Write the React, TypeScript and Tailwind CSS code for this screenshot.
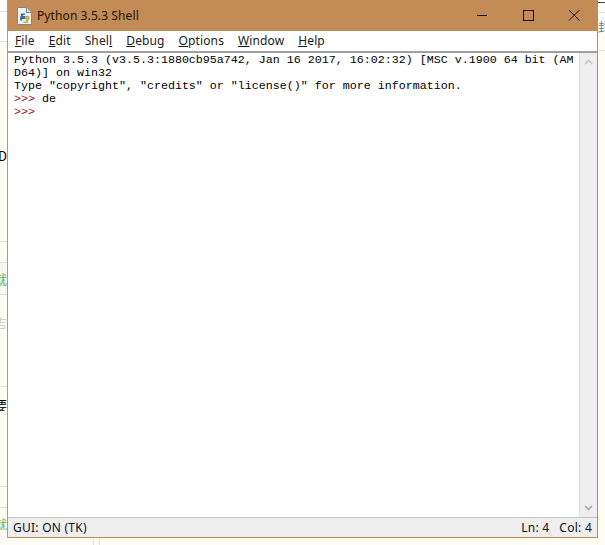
import React from "react";

/* ========= Menu ========= */
const menus: { pre: string; key: string; post: string }[] = [
  { pre: "", key: "F", post: "ile" },
  { pre: "", key: "E", post: "dit" },
  { pre: "Shel", key: "l", post: "" },
  { pre: "", key: "D", post: "ebug" },
  { pre: "", key: "O", post: "ptions" },
  { pre: "", key: "W", post: "indow" },
  { pre: "", key: "H", post: "elp" },
];

function PyIcon() {
  return (
    <svg width="17" height="18" viewBox="0 0 17 18">
      <path d="M1.5 0.5 H10.5 L15.5 5.5 V17.5 H1.5 Z" fill="#f1f2f6" stroke="#7f8594" />
      <path d="M10.5 0.5 V5.5 H15.5" fill="#d5d9e3" stroke="#7f8594" />
      <path d="M5 6.5 H9 V8 H7 V9 H9.5 V12 H6 V13.5 H4 V9.5 H5 Z" fill="#3b6ea8" />
      <path d="M10 9 H13.5 V13 H12 V16 H7.5 V14.5 H10 Z" fill="#c8b53a" />
    </svg>
  );
}

/* ========= Fragments of the page behind the window ========= */
function Clipped({ h, color, children }: { h: string; color: string; children: string }) {
  return (
    <div className={`flex ${h} items-center justify-end overflow-hidden font-['Noto_Sans_CJK_SC',sans-serif] text-[13px] leading-none ${color}`}>
      <span className="shrink-0">{children}</span>
    </div>
  );
}

/* ========= Component ========= */
export default function App() {
  return (
    <div className="flex h-[545px] w-[605px] overflow-hidden bg-[#fffdf3]">
      {/* Left side */}
      <div className="flex w-[7px] shrink-0 flex-col">
        <div className="h-[12px] border-b border-[#e2e2e2] bg-white" />
        <div className="h-[30px] border-b border-[#e2e2e2] bg-white" />
        <div className="h-[107px]" />
        <Clipped h="h-[13px]" color="text-black">D</Clipped>
        <div className="h-[80px] border-b border-[#e2e2e2]" />
        <div className="h-[20px]" />
        <div className="h-[33px] border-y border-[#e2e2e2] bg-[#f7f7f5] pt-[8px]">
          <Clipped h="h-[15px]" color="text-[#5db44a]">就</Clipped>
        </div>
        <div className="h-[20px]" />
        <Clipped h="h-[14px]" color="text-[#cfcfcf]">吉</Clipped>
        <div className="h-[58px] border-b border-[#e2e2e2]" />
        <div className="h-[11px]" />
        <Clipped h="h-[13px]" color="text-black">要</Clipped>
        <div className="h-[76px] border-b border-[#e2e2e2]" />
        <div className="h-[21px] border-b border-[#e2e2e2]" />
        <div className="h-[8px]" />
        <Clipped h="h-[14px]" color="text-[#5db44a]">就</Clipped>
      </div>

      <div className="flex w-[591px] shrink-0 flex-col">
        {/* Shell window */}
        <div className="flex h-[538px] shrink-0 flex-col border border-t-0 border-[#c08b58] border-l-[#a89a8c] bg-white">
          <div className="flex h-[31px] shrink-0 items-center bg-[#c38b56] pl-[8px] font-['Noto_Sans',sans-serif] text-[12px] tracking-[0.1px] text-[#1d1408]">
            <PyIcon />
            <span className="ml-[4px]">Python 3.5.3 Shell</span>
            <div className="ml-auto flex items-center">
              <svg width="46" height="31" viewBox="0 0 46 31">
                <path d="M18 15.5 H28" stroke="#111" strokeWidth="1" />
              </svg>
              <svg width="46" height="31" viewBox="0 0 46 31">
                <rect x="18.5" y="10.5" width="10" height="10" fill="none" stroke="#111" />
              </svg>
              <svg width="46" height="31" viewBox="0 0 46 31">
                <path d="M18 10 L28.5 20.5 M28.5 10 L18 20.5" stroke="#111" />
              </svg>
            </div>
          </div>

          <div className="flex h-[20px] shrink-0 items-center gap-[14px] pl-[7px] font-['Noto_Sans',sans-serif] text-[12px] tracking-[0.12px] text-[#1a1a1a]">
            {menus.map((m) => (
              <span key={m.pre + m.key + m.post}>
                {m.pre}
                <span className="underline">{m.key}</span>
                {m.post}
              </span>
            ))}
          </div>

          <div className="flex min-h-0 flex-1 border-t-2 border-[#a0a0a0]">
            <div className="flex-1 border-r border-[#e0e0e0] pl-[6px] pt-[1px] font-['Liberation_Mono',monospace] text-[11.67px] leading-[13px] whitespace-pre text-black">
              <div>Python 3.5.3 (v3.5.3:1880cb95a742, Jan 16 2017, 16:02:32) [MSC v.1900 64 bit (AM</div>
              <div>D64)] on win32</div>
              <div>Type "copyright", "credits" or "license()" for more information.</div>
              <div>
                <span className="text-[#8e1a1a]">&gt;&gt;&gt;</span> de
              </div>
              <div className="text-[#8e1a1a]">&gt;&gt;&gt;</div>
            </div>
            <div className="flex w-[17px] shrink-0 flex-col items-center justify-between bg-[#eeeeee] py-[6px]">
              <svg width="9" height="6" viewBox="0 0 9 6">
                <path d="M1 5 L4.5 1.5 L8 5" fill="none" stroke="#c4c4c4" strokeWidth="1.6" />
              </svg>
              <svg width="9" height="6" viewBox="0 0 9 6">
                <path d="M1 1 L4.5 4.5 L8 1" fill="none" stroke="#a6a6a6" strokeWidth="1.6" />
              </svg>
            </div>
          </div>

          <div className="flex h-[20px] shrink-0 items-center border-t border-[#c4c4c4] bg-[#eeeeee] px-[5px] font-['Noto_Sans',sans-serif] text-[12px] tracking-[0.25px] text-[#111]">
            <span>GUI: ON (TK)</span>
            <span className="ml-auto">Ln: 4</span>
            <span className="ml-[10px]">Col: 4</span>
          </div>
        </div>
        {/* Strip under the window */}
        <div className="flex flex-1">
          <div className="w-[87px] border-r border-[#e2e2e2]" />
          <div className="ml-[5px] flex-1 border-l border-[#e2e2e2]" />
        </div>
      </div>

      {/* Right side */}
      <div className="flex flex-1 flex-col overflow-hidden">
        <div className="h-[3px] border-b border-[#444] bg-white" />
        <div className="h-[9px] bg-white" />
        <div className="h-[8px] border-t border-[#e2e2e2] bg-white" />
        <div className="h-[13px] overflow-hidden font-['Noto_Sans_CJK_SC',sans-serif] text-[12px] leading-[13px] text-[#6f7c8c]">
          <span className="block w-[12px]">封</span>
        </div>
        <div className="h-[18px] border-b border-[#e2e2e2]" />
      </div>
    </div>
  );
}
